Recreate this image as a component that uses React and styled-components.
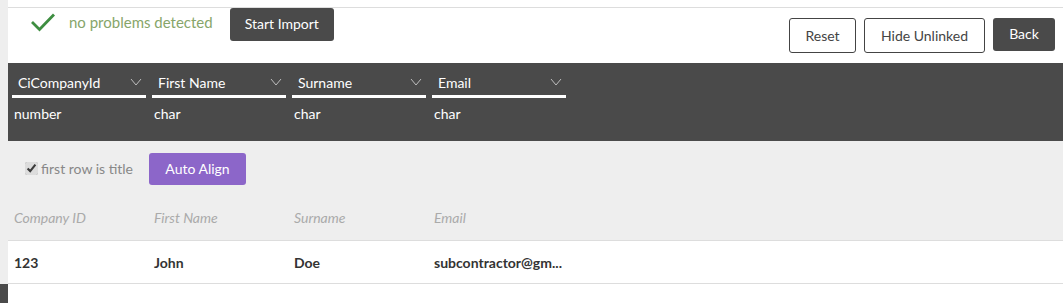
import styled, { createGlobalStyle } from 'styled-components';

const GlobalStyle = createGlobalStyle`
  body {
    margin: 0;
    background: #eeeeee;
    font-family: Lato, "Open Sans", sans-serif;
    overflow: hidden;
  }
`;

const columns = [
  { field: 'CiCompanyId', type: 'number', title: 'Company ID', value: '123' },
  { field: 'First Name', type: 'char', title: 'First Name', value: 'John' },
  { field: 'Surname', type: 'char', title: 'Surname', value: 'Doe' },
  { field: 'Email', type: 'char', title: 'Email', value: 'subcontractor@gmail.com' },
];

function App() {
  return (
    <>
      <GlobalStyle />
      <Page>
        <SideStrip>
          <SideFoot />
        </SideStrip>
        <Main>
          <TopSpacer />
          <TopBar>
            <Status>
              <CheckIcon viewBox="0 0 26 20">
                <path d="M2 10 L9.5 17.5 L24 2.5" fill="none" stroke="#3e8e41" strokeWidth="2.8" />
              </CheckIcon>
              <StatusText>no problems detected</StatusText>
              <DarkButton $height={33}>Start Import</DarkButton>
            </Status>
            <Actions>
              <OutlineButton $width={67}>Reset</OutlineButton>
              <OutlineButton $width={121}>Hide Unlinked</OutlineButton>
              <DarkButton $height={33} $width={62}>Back</DarkButton>
            </Actions>
          </TopBar>

          <MappingPanel>
            <ColumnGrid>
              {columns.map((c) => (
                <MapColumn key={c.field}>
                  <FieldSelect>
                    <span>{c.field}</span>
                    <Chevron viewBox="0 0 12 8">
                      <path d="M1 1 L6 7 L11 1" fill="none" stroke="#bdbdbd" strokeWidth="1" />
                    </Chevron>
                  </FieldSelect>
                  <TypeLabel>{c.type}</TypeLabel>
                </MapColumn>
              ))}
            </ColumnGrid>
          </MappingPanel>

          <OptionsArea>
            <OptionRow>
              <CheckLabel>
                <input type="checkbox" defaultChecked />
                first row is title
              </CheckLabel>
              <PurpleButton>Auto Align</PurpleButton>
            </OptionRow>
            <HeaderRow>
              {columns.map((c) => (
                <HeaderCell key={c.field}>{c.title}</HeaderCell>
              ))}
            </HeaderRow>
          </OptionsArea>

          <DataRow>
            {columns.map((c) => (
              <DataCell key={c.field}>
                {c.value.length > 16 ? c.value.slice(0, 16) + '...' : c.value}
              </DataCell>
            ))}
          </DataRow>
        </Main>
      </Page>
    </>
  );
}

export default App;

const Page = styled.div`
  display: flex;
  height: 303px;
  width: 1063px;
`;

const SideStrip = styled.div`
  width: 8px;
  flex-shrink: 0;
  background: #eeeeee;
  display: flex;
  flex-direction: column;
  justify-content: flex-end;
`;

const SideFoot = styled.div`
  height: 19px;
  background: #4a4a4a;
`;

const Main = styled.div`
  flex: 1;
  background: #ffffff;
  display: flex;
  flex-direction: column;
`;

const TopSpacer = styled.div`
  height: 7px;
  border-bottom: 1px solid #dddddd;
`;

const TopBar = styled.div`
  height: 55px;
  display: flex;
  justify-content: space-between;
  align-items: flex-start;
  padding: 0 8px 0 22px;
`;

const Status = styled.div`
  display: flex;
  align-items: flex-start;
`;

const CheckIcon = styled.svg`
  width: 26px;
  height: 20px;
  margin-top: 4px;
`;

const StatusText = styled.span`
  margin: 5px 17px 0 13px;
  font-size: 15px;
  color: #87a56a;
`;

const DarkButton = styled.button`
  height: ${(p) => p.$height}px;
  ${(p) => (p.$width ? `width: ${p.$width}px;` : 'padding-left: 15px; padding-right: 15px;')}
  padding-top: 0;
  padding-bottom: 3px;
  background: #4a4a4a;
  color: #ffffff;
  border: none;
  border-radius: 3px;
  font-family: Lato, sans-serif;
  font-size: 14px;
`;

const Actions = styled.div`
  display: flex;
  gap: 8px;
  margin-top: 10px;
  align-items: flex-start;
`;

const OutlineButton = styled.button`
  width: ${(p) => p.$width}px;
  height: 35px;
  background: #ffffff;
  color: #444444;
  border: 1px solid #444444;
  border-radius: 3px;
  font-family: Lato, sans-serif;
  font-size: 14px;
`;

const MappingPanel = styled.div`
  height: 78px;
  background: #4a4a4a;
  padding: 6px 4px 0;
  box-sizing: border-box;
`;

const ColumnGrid = styled.div`
  display: grid;
  grid-template-columns: repeat(4, 134px);
  column-gap: 6px;
`;

const MapColumn = styled.div`
  display: flex;
  flex-direction: column;
`;

const FieldSelect = styled.div`
  height: 26px;
  border-bottom: 3px solid #ffffff;
  display: flex;
  align-items: center;
  justify-content: space-between;
  padding: 0 4px 0 6px;
  color: #ffffff;
  font-size: 14px;
`;

const Chevron = styled.svg`
  width: 12px;
  height: 8px;
`;

const TypeLabel = styled.div`
  margin-top: 8px;
  margin-left: 2px;
  color: #ffffff;
  font-size: 14px;
  line-height: 16px;
`;

const OptionsArea = styled.div`
  height: 100px;
  background: #eeeeee;
  border-bottom: 1px solid #dddddd;
  padding: 12px 6px 0;
  box-sizing: border-box;
`;

const OptionRow = styled.div`
  display: flex;
  align-items: center;
  gap: 16px;
  padding-left: 11px;
`;

const CheckLabel = styled.label`
  display: flex;
  align-items: center;
  gap: 3px;
  margin-top: -2px;
  font-size: 14px;
  color: #888888;

  input {
    margin: 0;
    width: 13px;
    height: 13px;
    accent-color: #dcdcdc;
  }
`;

const PurpleButton = styled.button`
  width: 97px;
  height: 32px;
  padding-bottom: 2px;
  background: #8c66c9;
  color: #ffffff;
  border: none;
  border-radius: 3px;
  font-family: Lato, sans-serif;
  font-size: 14px;
`;

const HeaderRow = styled.div`
  display: grid;
  grid-template-columns: repeat(4, 140px);
  margin-top: 24px;
`;

const HeaderCell = styled.div`
  font-size: 14px;
  font-style: italic;
  color: #aaaaaa;
`;

const DataRow = styled.div`
  height: 42px;
  display: grid;
  grid-template-columns: repeat(4, 140px);
  align-items: center;
  padding: 0 6px;
  border-bottom: 1px solid #dddddd;
`;

const DataCell = styled.div`
  font-size: 14px;
  font-weight: bold;
  color: #333333;
`;
